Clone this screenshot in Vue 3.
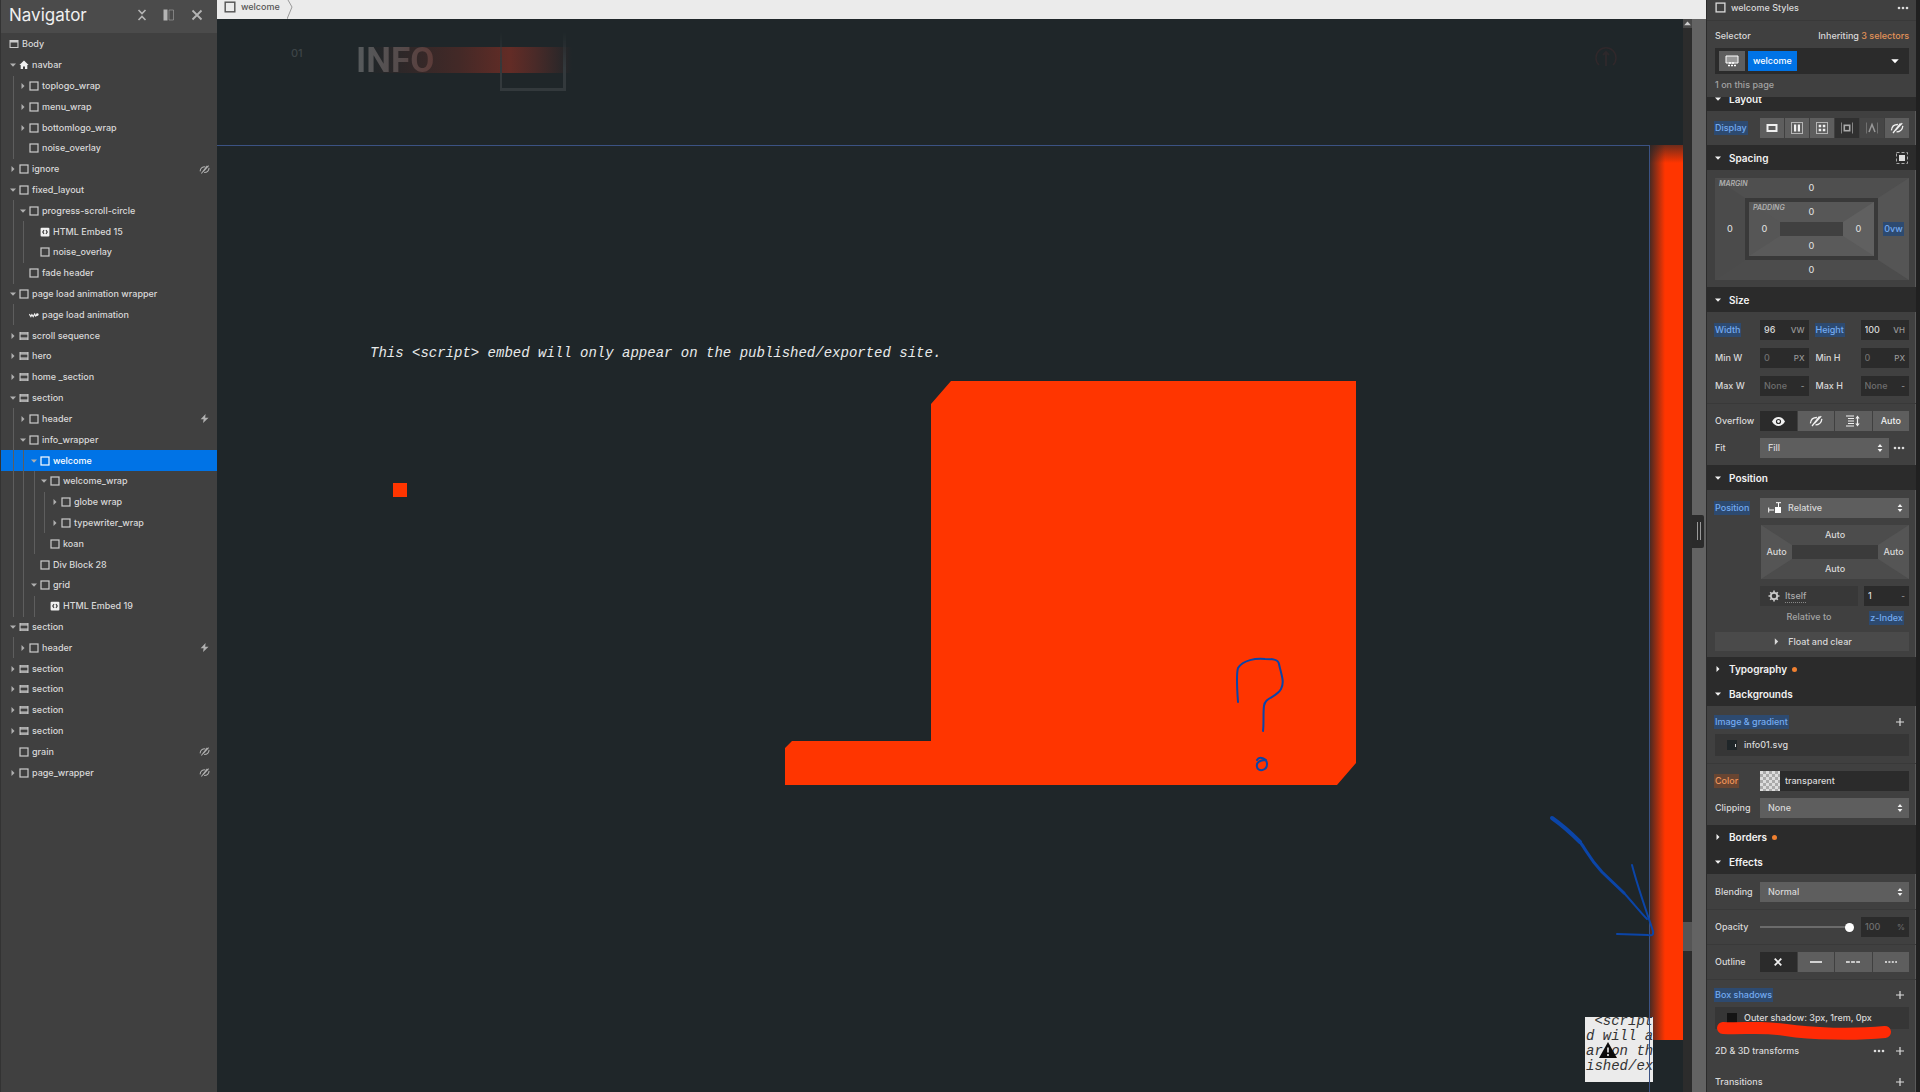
<template>
    <div class="designer">
        <svg class="defs" aria-hidden="true">
            <symbol id="i-box" viewBox="0 0 10 10"><rect x="1" y="1" width="8" height="8" fill="none" stroke="currentColor" stroke-width="1.2" /></symbol>
            <symbol id="i-body" viewBox="0 0 10 10"><path d="M.5 1h9v8h-9zM1.6 3.4v4.5h6.8V3.4z" fill="currentColor" fill-rule="evenodd" /></symbol>
            <symbol id="i-home" viewBox="0 0 10 10"><path d="M5 .6L9.6 5H8.3v4H6V6.4H4V9H1.7V5H.4z" fill="#f0f0f0" /></symbol>
            <symbol id="i-section" viewBox="0 0 10 10"><path d="M.5 1h9v8h-9zM1.6 3.5v3h6.8v-3zM1.6 1.8v.5h6.8v-.5zM1.6 7.7v.5h6.8v-.5z" fill="currentColor" fill-rule="evenodd" /></symbol>
            <symbol id="i-embed" viewBox="0 0 10 10">
                <rect x=".6" y=".8" width="8.8" height="8.6" rx="1" fill="#f0f0f0" />
                <path d="M4 3.2L2.8 5 4 6.9M6 3.2L7.2 5 6 6.9" fill="none" stroke="#404040" stroke-width="1.2" />
            </symbol>
            <symbol id="i-lottie" viewBox="0 0 10 10"><path d="M.3 4.200l1.600 2.400 1-2 1.300 2L5.700 4l1 2L8 5" fill="none" stroke="#f0f0f0" stroke-width="1.2" /><circle cx="8.3" cy="4.6" r="1.3" fill="#f0f0f0" /></symbol>
            <symbol id="i-hidden" viewBox="0 0 12 12"><path d="M1.200 8C1.500 5 3.800 3 6.800 3M11 4.200C10.800 7.200 8.500 9.300 5.600 9.300M2.600 10.300L9 2M4.800 8L10.500 1.800" fill="none" stroke="currentColor" stroke-width="1.1" /></symbol>
            <symbol id="i-bolt" viewBox="0 0 10 10"><path d="M6 1L1.5 5.700h2.700L3.700 9.200l5-4.900H5.600z" fill="currentColor" /></symbol>
            <symbol id="i-down" viewBox="0 0 8 8"><path d="M1 2.5h6L4 5.8z" fill="currentColor" /></symbol>
            <symbol id="i-right" viewBox="0 0 8 8"><path d="M2.5 1v6l3-3z" fill="currentColor" /></symbol>
            <symbol id="i-plus" viewBox="0 0 10 10"><path d="M5 1v8M1 5h8" stroke="currentColor" stroke-width="1.2" /></symbol>
            <symbol id="i-dots" viewBox="0 0 12 4"><circle cx="2" cy="2" r="1.3" fill="currentColor" /><circle cx="6" cy="2" r="1.3" fill="currentColor" /><circle cx="10" cy="2" r="1.3" fill="currentColor" /></symbol>
            <symbol id="i-sort" viewBox="0 0 6 10"><path d="M.6 4L3 1l2.400 3zM.6 6L3 9l2.400-3z" fill="currentColor" /></symbol>
            <symbol id="i-block" viewBox="0 0 14 14"><path d="M1.500 3h11v8h-11zM3.500 5v4h7V5z" fill="currentColor" fill-rule="evenodd" /></symbol>
            <symbol id="i-flex" viewBox="0 0 14 14"><rect x="1.5" y="1.5" width="11" height="11" fill="none" stroke="currentColor" stroke-opacity=".6" /><path d="M4 3.500h2.200v7H4zM7.800 3.500H10v7H7.800z" fill="currentColor" /></symbol>
            <symbol id="i-grid" viewBox="0 0 14 14"><rect x="1.5" y="1.5" width="11" height="11" fill="none" stroke="currentColor" stroke-opacity=".6" /><path d="M3.700 3.700h2.500v2.500H3.700zM7.800 3.700h2.500v2.500H7.800zM3.700 7.800h2.500v2.500H3.700zM7.800 7.800h2.500v2.500H7.800z" fill="currentColor" /></symbol>
            <symbol id="i-inline-block" viewBox="0 0 14 14"><path d="M1.500 1.500v11M12.500 1.500v11" stroke="currentColor" stroke-opacity=".7" /><rect x="4.3" y="4.3" width="5.4" height="5.4" fill="none" stroke="currentColor" stroke-width="1.6" /></symbol>
            <symbol id="i-inline" viewBox="0 0 14 14"><path d="M1.500 1.500v11M12.500 1.500v11" stroke="currentColor" stroke-opacity=".5" /><path d="M4 11L7 3.500 10 11" fill="none" stroke="currentColor" stroke-width="1.5" /></symbol>
            <symbol id="i-eye" viewBox="0 0 12 12"><path d="M0 6c1.500-2.800 3.700-4.100 6-4.100S10.500 3.200 12 6c-1.500 2.800-3.700 4.100-6 4.100S1.500 8.800 0 6zm6-2.400a2.400 2.400 0 100 4.800 2.400 2.400 0 000-4.800z" fill="currentColor" fill-rule="evenodd" /><circle cx="6" cy="6" r="1.3" fill="currentColor" /></symbol>
            <symbol id="i-scroll" viewBox="0 0 14 12"><path d="M0 1h8M2 3.500h6M2 6h6M2 8.500h6M0 11h8M11.500 2v8" stroke="currentColor" stroke-width="1.2" /><path d="M9.300 3.500L11.500.5l2.200 3zM9.300 8.500l2.200 3 2.200-3z" fill="currentColor" /></symbol>
            <symbol id="i-cross" viewBox="0 0 10 10"><path d="M1.700 1.700l6.600 6.600M8.300 1.700L1.700 8.300" stroke="currentColor" stroke-width="1.8" /></symbol>
            <symbol id="i-solid" viewBox="0 0 14 10"><path d="M1 5h12" stroke="currentColor" stroke-width="1.6" /></symbol>
            <symbol id="i-dashed" viewBox="0 0 14 10"><path d="M0 5h14" stroke="currentColor" stroke-width="1.6" stroke-dasharray="3.8 1.3" /></symbol>
            <symbol id="i-dotted" viewBox="0 0 14 10"><path d="M1 5h12" stroke="currentColor" stroke-width="1.6" stroke-dasharray="2 1.4" /></symbol>
        </svg>

        <aside class="navigator">
            <header class="nav-head">
                <h1>Navigator</h1>
                <button aria-label="Collapse all">
                    <svg width="10" height="12" viewBox="0 0 10 12"><path d="M1.500 1L5 4.500 8.500 1M1.500 11L5 7.500 8.500 11" fill="none" stroke="currentColor" stroke-width="1.6" /></svg>
                </button>
                <button aria-label="Pin">
                    <svg width="12" height="12" viewBox="0 0 12 12"><path d="M.5.5h4v11h-4z" fill="currentColor" /><path d="M6 1h4.500v10H6z" fill="none" stroke="currentColor" stroke-opacity=".5" /></svg>
                </button>
                <button aria-label="Close">
                    <svg width="12" height="12" viewBox="0 0 12 12"><path d="M1.500 1.500l9 9M10.500 1.500l-9 9" stroke="currentColor" stroke-width="1.8" /></svg>
                </button>
            </header>
            <ul class="tree">
                <li v-for="(node, i) in nodes" :key="i" :class="{ active: i === selected }" :style="{ paddingLeft: indent(node.depth, 8) + 'px' }" @click="selected = i">
                    <i v-for="n in Math.max(node.depth - 1, 0)" :key="n" class="guide" :style="{ left: indent(n, 2) + 'px' }"></i>
                    <svg v-if="node.open !== undefined" class="caret" :style="{ left: indent(node.depth, -2) + 'px' }" width="8" height="8">
                        <use :href="node.open ? '#i-down' : '#i-right'" />
                    </svg>
                    <svg class="type" width="10" height="10"><use :href="'#i-' + node.icon" /></svg>
                    <span>{{ node.name }}</span>
                    <svg v-if="node.mark" class="mark" width="11" height="11"><use :href="'#i-' + node.mark" /></svg>
                </li>
            </ul>
        </aside>

        <main class="stage">
            <nav class="crumbs">
                <a href="#"><svg width="12" height="12"><use href="#i-box" /></svg>welcome</a>
                <svg width="7" height="19" viewBox="0 0 7 19"><path d="M1 0l4 7L0 19" fill="none" stroke="#999" /></svg>
            </nav>
            <div class="view">
                <div class="canvas">
                    <span class="index">01</span>
                    <span class="glow"></span>
                    <h2 class="info">INFO</h2>
                    <span class="frame"></span>
                    <svg class="badge" width="24" height="24" viewBox="0 0 24 24"><path d="M5 19A10 10 0 1119 19" fill="none" stroke="#30282b" stroke-width="1.5" /><path d="M9 9l3-3 3 3M12 6v14" fill="none" stroke="#2d282b" stroke-width="2" /></svg>
                    <p class="embed-note">This &lt;script&gt; embed will only appear on the published/exported site.</p>
                    <span class="dot"></span>
                    <svg class="plate" width="571" height="404" viewBox="0 0 571 404"><path d="M146 23L166 0H571V382L552 404H0V367L7 360H146z" fill="#ff3500" /></svg>
                    <div class="strip"></div>
                    <div class="thumb">
                        <pre> &lt;script
d will a
ar on th
ished/ex</pre>
                        <svg width="18" height="16" viewBox="0 0 18 16"><path d="M9 0l9 16H0z" fill="#0c0c0c" /><path d="M9 5.500v5M9 12v2" stroke="#eee" stroke-width="1.6" /></svg>
                    </div>
                    <div class="outline"></div>
                    <svg class="question" width="60" height="120" viewBox="0 0 60 120">
                        <path d="M8 49C7 35 6 22 8 15 13 7 26 5 35 6c7 0 13 0 14 5 2 10 6 18 2 25-5 9-16 8-17 17-1 7 0 18-1 25" />
                        <path d="M27 107c2-4 10-2 10 4 0 7-9 8-10 3-1-4 2-7 9-7" />
                    </svg>
                    <svg class="arrow" width="110" height="130" viewBox="0 0 110 130">
                        <path d="M6 5C16 12 27 22 34 29" stroke-width="4" />
                        <path d="M34 29C41 38 42 44 56 59L78 80" stroke-width="3" />
                        <path d="M78 80C88 91 94 99 101 106" stroke-width="2" />
                        <path d="M86 52C92 75 99 94 107 118c1 6-3 4-5 4L71 121" stroke-width="2" />
                    </svg>
                </div>
                <div class="scrollbar">
                    <svg width="7" height="7"><use href="#i-down" /></svg>
                    <span></span>
                </div>
                <div class="gutter"><span></span></div>
            </div>
        </main>

        <aside class="styles">
            <div class="styles-head">
                <div class="title"><svg width="11" height="11"><use href="#i-box" /></svg>welcome Styles
                    <button class="plain" aria-label="More"><svg width="12" height="4"><use href="#i-dots" /></svg></button>
                </div>
                <div class="selector">
                    <div class="inherit"><span>Selector</span><span>Inheriting <a href="#">3 selectors</a></span></div>
                    <div class="combo">
                        <button class="device" aria-label="States">
                            <svg width="14" height="12" viewBox="0 0 14 12"><path d="M1 1h12v7H1z" fill="#999" stroke="#fff" /><path d="M3 10.500h8M4 8h6" stroke="#fff" stroke-width="1.4" stroke-dasharray="2 1" /></svg>
                        </button>
                        <button class="tag">welcome</button>
                        <svg width="10" height="10"><use href="#i-down" /></svg>
                    </div>
                    <small>1 on this page</small>
                </div>
            </div>

            <h3><svg width="8" height="8"><use href="#i-down" /></svg>Layout</h3>
            <div class="group layout">
                <div class="field">
                    <span class="label"><em>Display</em></span>
                    <div class="buttons display">
                        <button v-for="d in displays" :key="d" :class="d" :aria-label="d"><svg width="14" height="14"><use :href="'#i-' + d" /></svg></button>
                    </div>
                </div>
            </div>

            <h3><svg width="8" height="8"><use href="#i-down" /></svg>Spacing
                <button class="plain" aria-label="Spacing mode"><svg width="14" height="12" viewBox="0 0 14 12"><rect x="1.5" y=".5" width="11" height="11" fill="none" stroke="#aaa" stroke-dasharray="3 2" /><path d="M4 3h6v6H4z" fill="#ddd" /></svg></button>
            </h3>
            <div class="group">
                <div class="margin">
                    <b>MARGIN</b>
                    <button>0</button><button>0</button><button class="set"><em>0vw</em></button><button>0</button>
                    <div class="padding">
                        <b>PADDING</b>
                        <button>0</button><button>0</button><button>0</button><button>0</button>
                    </div>
                </div>
            </div>

            <h3><svg width="8" height="8"><use href="#i-down" /></svg>Size</h3>
            <div class="group">
                <div class="sizes">
                    <template v-for="s in sizes" :key="s.label">
                        <label :for="s.label"><em v-if="s.value">{{ s.label }}</em><template v-else>{{ s.label }}</template></label>
                        <div class="input"><input :id="s.label" v-model="s.value" :placeholder="s.hint"><span>{{ s.unit }}</span></div>
                    </template>
                </div>
                <hr>
                <div class="field">
                    <span class="label">Overflow</span>
                    <div class="buttons">
                        <button class="on" aria-label="Visible"><svg width="13" height="13"><use href="#i-eye" /></svg></button>
                        <button aria-label="Hidden"><svg width="14" height="14"><use href="#i-hidden" /></svg></button>
                        <button aria-label="Scroll"><svg width="14" height="12"><use href="#i-scroll" /></svg></button>
                        <button>Auto</button>
                    </div>
                </div>
                <div class="field">
                    <label for="fit">Fit</label>
                    <div class="select"><select id="fit"><option>Fill</option></select><svg width="6" height="10"><use href="#i-sort" /></svg></div>
                    <button class="plain more" aria-label="More"><svg width="12" height="4"><use href="#i-dots" /></svg></button>
                </div>
            </div>

            <h3><svg width="8" height="8"><use href="#i-down" /></svg>Position</h3>
            <div class="group position">
                <div class="field">
                    <label for="pos"><em>Position</em></label>
                    <div class="select with-icon">
                        <svg class="pos-icon" width="14" height="12" viewBox="0 0 14 12"><path d="M7 5h6v6H7z" fill="#fff" /><path d="M8 .7h5M10.500 1v4M.7 5.500v5M1 8h5" stroke="#fff" /></svg>
                        <select id="pos"><option>Relative</option></select><svg width="6" height="10"><use href="#i-sort" /></svg>
                    </div>
                </div>
                <div class="offsets"><button>Auto</button><button>Auto</button><button>Auto</button><button>Auto</button></div>
                <div class="relative">
                    <button class="itself"><svg width="12" height="12" viewBox="0 0 12 12"><circle cx="6" cy="6" r="3.2" fill="none" stroke="#ccc" stroke-width="1.8" /><path d="M6 .5v2M6 9.500v2M.5 6h2M9.500 6h2M2.200 2.200l1.300 1.300M8.500 8.500l1.300 1.300M2.200 9.800l1.300-1.300M8.500 3.500l1.300-1.300" stroke="#ccc" stroke-width="1.6" /></svg><u>Itself</u></button>
                    <div class="input"><input id="z" value="1"><span>-</span></div>
                    <small>Relative to</small>
                    <label for="z"><em>z-Index</em></label>
                </div>
                <button class="float"><svg width="9" height="9"><use href="#i-right" /></svg>Float and clear</button>
            </div>

            <h3 class="closed"><svg width="8" height="8"><use href="#i-right" /></svg>Typography<i></i></h3>
            <h3><svg width="8" height="8"><use href="#i-down" /></svg>Backgrounds</h3>
            <div class="group backgrounds">
                <div class="adder"><em>Image &amp; gradient</em><button class="plain" aria-label="Add background"><svg width="10" height="10"><use href="#i-plus" /></svg></button></div>
                <div class="layer"><span class="chip image"></span>info01.svg</div>
                <hr>
                <div class="field">
                    <label for="color"><em class="warm">Color</em></label>
                    <span class="swatch"></span>
                    <div class="input"><input id="color" value="transparent"></div>
                </div>
                <div class="field">
                    <label for="clip">Clipping</label>
                    <div class="select"><select id="clip"><option>None</option></select><svg width="6" height="10"><use href="#i-sort" /></svg></div>
                </div>
            </div>

            <h3 class="closed"><svg width="8" height="8"><use href="#i-right" /></svg>Borders<i></i></h3>
            <h3><svg width="8" height="8"><use href="#i-down" /></svg>Effects</h3>
            <div class="group effects">
                <div class="field">
                    <label for="blend">Blending</label>
                    <div class="select"><select id="blend"><option>Normal</option></select><svg width="6" height="10"><use href="#i-sort" /></svg></div>
                </div>
                <hr>
                <div class="field">
                    <label for="opacity">Opacity</label>
                    <input id="opacity" v-model="opacity" type="range" min="0" max="100">
                    <div class="input dim"><input v-model="opacity" aria-label="Opacity percent"><span>%</span></div>
                </div>
                <hr>
                <div class="field">
                    <span class="label">Outline</span>
                    <div class="buttons">
                        <button v-for="o in outlines" :key="o" :class="{ on: o === 'cross' }" :aria-label="o"><svg :width="o === 'cross' ? 10 : 14" height="10"><use :href="'#i-' + o" /></svg></button>
                    </div>
                </div>
                <hr>
                <div class="adder"><em>Box shadows</em><button class="plain" aria-label="Add shadow"><svg width="10" height="10"><use href="#i-plus" /></svg></button></div>
                <div class="layer"><span class="chip"></span>Outer shadow: 3px, 1rem, 0px
                    <svg class="marker" width="178" height="18" viewBox="0 0 178 18"><path d="M7 6C30 7 45 4 70 8s68 5 99 2" fill="none" stroke="#ff2a05" stroke-width="12" stroke-linecap="round" stroke-linejoin="round" /></svg>
                </div>
                <div class="adder tail">2D &amp; 3D transforms
                    <button class="plain" aria-label="Transform settings"><svg width="12" height="4"><use href="#i-dots" /></svg></button>
                    <button class="plain" aria-label="Add transform"><svg width="10" height="10"><use href="#i-plus" /></svg></button>
                </div>
                <div class="adder tail">Transitions
                    <button class="plain" aria-label="Add transition"><svg width="10" height="10"><use href="#i-plus" /></svg></button>
                </div>
            </div>
        </aside>
    </div>
</template>

<script setup>
import { reactive, ref } from 'vue'

const selected = ref(20)
const opacity = ref(100)

const nodes = [
    { name: 'Body', depth: 0, icon: 'body' },
    { name: 'navbar', depth: 1, icon: 'home', open: true },
    { name: 'toplogo_wrap', depth: 2, icon: 'box', open: false },
    { name: 'menu_wrap', depth: 2, icon: 'box', open: false },
    { name: 'bottomlogo_wrap', depth: 2, icon: 'box', open: false },
    { name: 'noise_overlay', depth: 2, icon: 'box' },
    { name: 'ignore', depth: 1, icon: 'box', open: false, mark: 'hidden' },
    { name: 'fixed_layout', depth: 1, icon: 'box', open: true },
    { name: 'progress-scroll-circle', depth: 2, icon: 'box', open: true },
    { name: 'HTML Embed 15', depth: 3, icon: 'embed' },
    { name: 'noise_overlay', depth: 3, icon: 'box' },
    { name: 'fade header', depth: 2, icon: 'box' },
    { name: 'page load animation wrapper', depth: 1, icon: 'box', open: true },
    { name: 'page load animation', depth: 2, icon: 'lottie' },
    { name: 'scroll sequence', depth: 1, icon: 'section', open: false },
    { name: 'hero', depth: 1, icon: 'section', open: false },
    { name: 'home _section', depth: 1, icon: 'section', open: false },
    { name: 'section', depth: 1, icon: 'section', open: true },
    { name: 'header', depth: 2, icon: 'box', open: false, mark: 'bolt' },
    { name: 'info_wrapper', depth: 2, icon: 'box', open: true },
    { name: 'welcome', depth: 3, icon: 'box', open: true },
    { name: 'welcome_wrap', depth: 4, icon: 'box', open: true },
    { name: 'globe wrap', depth: 5, icon: 'box', open: false },
    { name: 'typewriter_wrap', depth: 5, icon: 'box', open: false },
    { name: 'koan', depth: 4, icon: 'box' },
    { name: 'Div Block 28', depth: 3, icon: 'box' },
    { name: 'grid', depth: 3, icon: 'box', open: true },
    { name: 'HTML Embed 19', depth: 4, icon: 'embed' },
    { name: 'section', depth: 1, icon: 'section', open: true },
    { name: 'header', depth: 2, icon: 'box', open: false, mark: 'bolt' },
    { name: 'section', depth: 1, icon: 'section', open: false },
    { name: 'section', depth: 1, icon: 'section', open: false },
    { name: 'section', depth: 1, icon: 'section', open: false },
    { name: 'section', depth: 1, icon: 'section', open: false },
    { name: 'grain', depth: 1, icon: 'box', mark: 'hidden' },
    { name: 'page_wrapper', depth: 1, icon: 'box', open: false, mark: 'hidden' }
]

const displays = ['block', 'flex', 'grid', 'inline-block', 'inline', 'hidden']
const outlines = ['cross', 'solid', 'dashed', 'dotted']

const sizes = reactive([
    { label: 'Width', value: '96', unit: 'VW' },
    { label: 'Height', value: '100', unit: 'VH' },
    { label: 'Min W', value: '', hint: '0', unit: 'PX' },
    { label: 'Min H', value: '', hint: '0', unit: 'PX' },
    { label: 'Max W', value: '', hint: 'None', unit: '-' },
    { label: 'Max H', value: '', hint: 'None', unit: '-' }
])

// levels are a little over 10px apart
const indent = (depth, offset) => Math.floor(depth * 10.4) + offset
</script>

<style>
body {
    background: #1f2629;
}
</style>

<style scoped>
.designer {
    display: grid;
    grid-template-columns: 217px 1fr 213px;
    height: 100vh;
    overflow: hidden;
    font-family: Inter, "Liberation Sans", sans-serif;
    font-size: 9px;
    font-weight: 500;
    line-height: 12px;
    color: #d9d9d9;
}

.designer * {
    box-sizing: border-box;
}

.defs {
    position: absolute;
    width: 0;
    height: 0;
}

svg {
    display: block;
    flex: none;
}

button,
input,
select {
    font: inherit;
    color: inherit;
    border: 0;
    margin: 0;
    padding: 0;
    background: none;
    border-radius: 0;
    min-width: 0;
}

a {
    color: inherit;
    text-decoration: none;
}

/* navigator */
.navigator {
    background: #404040;
    border-left: 1px solid #333;
}

.nav-head {
    display: flex;
    align-items: center;
    gap: 16px;
    height: 33px;
    padding: 0 14px 4px 8px;
    background: #4b4b4b;
    color: #b5b5b5;
}

.nav-head h1 {
    flex: 1;
    margin: 0;
    font-size: 17px;
    line-height: 24px;
    font-weight: 400;
    color: #f0f0f0;
}

.tree {
    display: grid;
    grid-auto-rows: 1fr;
    height: 749px;
    margin: 1px 0 0;
    padding: 0;
    list-style: none;
}

.tree li {
    position: relative;
    display: flex;
    align-items: center;
    gap: 3px;
}

.tree li.active {
    background: #0073e6;
    color: #fff;
}

.tree .type {
    color: #ccc;
}

.tree .active .type {
    color: #fff;
}

.guide {
    position: absolute;
    top: 0;
    bottom: 0;
    width: 1px;
    background: #5e5e5e;
}

.caret {
    position: absolute;
    color: #b0b0b0;
}

.mark {
    margin: 0 7px 0 auto;
    color: #b0b0b0;
}

/* stage */
.stage {
    display: flex;
    flex-direction: column;
    min-width: 0;
    border-right: 1px solid #2b2b2b;
}

.crumbs {
    display: flex;
    height: 19px;
    background: #ebebeb;
    color: #555;
}

.crumbs a {
    display: flex;
    gap: 5px;
    padding: 1px 7px 0;
}

.view {
    flex: 1;
    display: flex;
    min-height: 0;
}

.canvas {
    position: relative;
    flex: 1;
    overflow: hidden;
    background: #1f2629;
}

.canvas > * {
    position: absolute;
}

.index {
    left: 74px;
    top: 28px;
    font-size: 11px;
    color: #3d4447;
}

.glow {
    left: 149px;
    top: 28px;
    width: 206px;
    height: 26px;
    background: linear-gradient(90deg, transparent, #432927 45%, #632c26 70%, #4a2a28 82%, transparent);
}

.info {
    left: 139px;
    top: 21px;
    margin: 0;
    font: 700 35px/42px Roboto, sans-serif;
    color: transparent;
    background: linear-gradient(90deg, #565b5d, #554a4a 60%, #5c3b38);
    background-clip: text;
}

.frame {
    left: 283px;
    top: 12px;
    width: 66px;
    height: 60px;
    border: solid #33393c;
    border-width: 0 3px 3px 2px;
    mask-image: linear-gradient(transparent, #000 60%);
}

.badge {
    right: 65px;
    top: 27px;
}

.embed-note {
    left: 153px;
    top: 324px;
    margin: 0;
    font: italic 14px/20px "Liberation Mono", monospace;
    color: #e8eaea;
    white-space: nowrap;
}

.dot {
    left: 176px;
    top: 464px;
    width: 14px;
    height: 14px;
    background: #ff3500;
}

.plate {
    left: 568px;
    top: 362px;
}

.strip {
    right: 0;
    top: 126px;
    width: 33px;
    height: 895px;
    background: linear-gradient(90deg, rgba(31, 38, 41, .8), transparent 15px), linear-gradient(rgba(31, 38, 41, .65), transparent 18px), #ff3500;
}

.outline {
    inset: 126px 33px 0 0;
    border: solid #3b5283;
    border-width: 1px 1px 0 0;
}

.thumb {
    right: 30px;
    top: 998px;
    width: 68px;
    height: 65px;
    overflow: hidden;
    background: #ebebeb;
}

.thumb pre {
    margin: -3px 0 0 1px;
    font: italic 14px/15px "Liberation Mono", monospace;
    color: #333;
}

.thumb svg {
    position: absolute;
    left: 14px;
    top: 25px;
}

.question,
.arrow {
    fill: none;
    stroke: #0b45a8;
    stroke-width: 2;
    stroke-linecap: round;
    stroke-linejoin: round;
}

.question {
    left: 1013px;
    top: 634px;
}

.arrow {
    right: 27px;
    top: 794px;
}

.scrollbar {
    position: relative;
    width: 9px;
    background: #2c2c2c;
}

.scrollbar svg {
    width: 9px;
    height: 9px;
    background: #484848;
    color: #ccc;
    transform: rotate(180deg);
}

.scrollbar span {
    position: absolute;
    top: 903px;
    width: 9px;
    height: 29px;
    background: #555;
}

.gutter {
    position: relative;
    width: 14px;
    background: #636363;
}

.gutter span {
    position: absolute;
    top: 496px;
    width: 12px;
    height: 33px;
    border-radius: 0 2px 2px 0;
    background: linear-gradient(#999, #999) 5px 7px / 1px 18px no-repeat, linear-gradient(#999, #999) 8px 7px / 1px 18px no-repeat, #2b2b2b;
}

/* styles panel */
.styles {
    overflow: hidden;
    background: #404040;
    border-right: 4px solid #202020;
    box-shadow: inset -1px 0 #5a5a5a;
}

.styles-head {
    position: relative;
    z-index: 1;
    height: 97px;
    margin-bottom: -11px;
    background: #404040;
}

.title {
    display: flex;
    align-items: center;
    gap: 5px;
    height: 21px;
    padding: 0 7px 5px 8px;
    border-bottom: 1px solid #393939;
}

.title button,
h3 button {
    margin-left: auto;
}

.plain {
    display: grid;
    place-items: center;
    color: #ddd;
}

.selector {
    padding: 9px 7px 0 8px;
}

.inherit {
    display: flex;
    justify-content: space-between;
}

.inherit a {
    color: #e39358;
}

.combo {
    display: flex;
    align-items: center;
    gap: 3px;
    height: 26px;
    margin: 6px 0 5px;
    padding: 0 9px 0 4px;
    background: #2b2b2b;
}

.combo > svg {
    margin-left: auto;
    color: #fff;
}

.device {
    display: grid;
    place-items: center;
    width: 26px;
    height: 20px;
    background: #5e5e5e;
}

.tag {
    height: 20px;
    padding: 0 5px;
    background: #0073e6;
    color: #fff;
}

small {
    font-size: 9px;
    color: #a3a3a3;
}

h3 {
    display: flex;
    align-items: center;
    gap: 7px;
    height: 25px;
    margin: 0;
    padding: 0 7px;
    font-size: 10px;
    font-weight: 600;
    color: #f2f2f2;
    background: #2b2b2b;
}

h3.closed {
    height: 24px;
}

h3 i {
    width: 5px;
    height: 5px;
    margin-left: -2px;
    border-radius: 50%;
    background: #f08030;
}

.group {
    display: flex;
    flex-direction: column;
    gap: 7px;
    padding: 8px 7px 7px 8px;
}

.layout {
    padding-top: 7px;
}

hr {
    width: calc(100% + 15px);
    height: 1px;
    margin: 0 -8px;
    border: 0;
    background: #393939;
}

.field {
    display: flex;
    align-items: center;
    height: 20px;
}

.field > label,
.field > .label {
    width: 45px;
    flex: none;
    white-space: nowrap;
}

em {
    display: inline-block;
    margin: 0 -1px;
    padding: 1px;
    font-style: normal;
    color: #74aaf0;
    background: #2d4a70;
}

em.warm {
    color: #f0955a;
    background: #684532;
}

.buttons {
    flex: 1;
    display: flex;
    gap: 1px;
    height: 20px;
    color: #f0f0f0;
}

.buttons button {
    flex: 1;
    display: grid;
    place-items: center;
    background: #5e5e5e;
}

.buttons .on {
    background: #2b2b2b;
}

.buttons .inline-block {
    background: #303030;
    color: #aaa;
}

.buttons .inline {
    background: #464646;
    color: #999;
}

.margin,
.padding,
.offsets {
    position: relative;
    display: grid;
    grid-template-areas: ". t ." "l c r" ". b .";
}

.margin {
    grid-template-rows: 20px 62px 20px;
    grid-template-columns: 30px 1fr 31px;
    background: #393939;
}

.margin::before,
.padding::before,
.offsets::before {
    content: "";
    position: absolute;
    inset: 0;
    border: 20px solid;
    border-color: #4f4f4f #555 #4c4c4c #4b4b4b;
}

.margin::before {
    border-left-width: 30px;
    border-right-width: 31px;
}

.margin b,
.padding b {
    position: absolute;
    left: 4px;
    top: 1px;
    z-index: 1;
    font-size: 7px;
    line-height: 10px;
    font-style: italic;
    font-weight: 600;
    color: #b0b0b0;
}

.margin button,
.padding button,
.offsets button {
    position: relative;
    text-align: center;
    white-space: nowrap;
}

button:nth-of-type(1) {
    grid-area: t;
}

button:nth-of-type(2) {
    grid-area: l;
}

button:nth-of-type(3) {
    grid-area: r;
}

button:nth-of-type(4) {
    grid-area: b;
}

.padding {
    grid-area: c;
    grid-template-rows: 20px 14px 20px;
    grid-template-columns: 31px 1fr 31px;
    margin: 4px;
    background: #404040;
}

.padding::before {
    border-left-width: 31px;
    border-right-width: 31px;
    border-color: #575757 #606060 #5a5a5a #565656;
}

.offsets {
    grid-template-rows: 20px 14px 20px;
    grid-template-columns: 31px 1fr 31px;
    margin-left: 46px;
    background: #3b3b3b;
}

.offsets::before {
    border-width: 20px 31px;
    border-color: #4c4c4c #555 #4c4c4c #555;
}

.sizes {
    display: grid;
    grid-template-columns: 45px 1fr 52px 1fr;
    grid-auto-rows: 20px;
    row-gap: 8px;
    align-items: center;
}

.sizes label:nth-of-type(even) {
    padding-left: 7px;
}

.input {
    display: flex;
    align-items: center;
    height: 20px;
    padding: 0 4px;
    background: #2b2b2b;
}

.input input {
    flex: 1;
    width: 0;
    outline: 0;
}

.input input::placeholder {
    color: #6f6f6f;
    opacity: 1;
}

.input span {
    font-size: 8px;
    color: #999;
}

.dim {
    width: 48px;
    color: #6f6f6f;
}

.dim span {
    color: #6f6f6f;
}

.select {
    position: relative;
    flex: 1;
    display: flex;
    align-items: center;
    height: 20px;
    background: #5e5e5e;
}

.select select {
    flex: 1;
    height: 20px;
    padding-left: 8px;
    appearance: none;
    outline: 0;
}

.select svg {
    position: absolute;
    right: 6px;
    pointer-events: none;
    color: #f0f0f0;
}

.with-icon select {
    padding-left: 28px;
}

.select .pos-icon {
    left: 8px;
    right: auto;
}

.more {
    width: 20px;
}

.position {
    padding-bottom: 6px;
}

.relative {
    display: grid;
    grid-template-columns: 98px 45px;
    justify-content: end;
    gap: 5px 6px;
}

.relative small,
.relative label {
    text-align: center;
}

.relative .itself {
    grid-area: auto;
    display: flex;
    align-items: center;
    gap: 5px;
    padding-left: 8px;
    background: #383838;
    color: #aaa;
}

.itself u {
    text-decoration: none;
    border-bottom: 1px dotted #888;
}

.float {
    display: flex;
    align-items: center;
    justify-content: center;
    gap: 7px;
    height: 19px;
    background: #4a4a4a;
}

.adder {
    display: flex;
    align-items: center;
    gap: 10px;
    height: 16px;
    margin-bottom: -3px;
    padding-right: 4px;
}

.adder button:first-of-type {
    margin-left: auto;
}

.layer {
    position: relative;
    display: flex;
    align-items: center;
    gap: 7px;
    height: 22px;
    padding-left: 12px;
    white-space: nowrap;
    background: #363636;
}

.effects .layer {
    margin-bottom: 3px;
}

.chip {
    width: 10px;
    height: 10px;
    background: #141414;
}

.image {
    background: linear-gradient(#ddd, #ddd) 8px 4px / 1px 3px no-repeat, #1f2629;
}

.backgrounds .field .input {
    flex: 1;
    padding-left: 5px;
}

.swatch {
    width: 20px;
    height: 20px;
    background: repeating-conic-gradient(#aaa 0 25%, #ddd 0 50%) 0 0 / 6px 6px;
}

.marker {
    position: absolute;
    left: 1px;
    top: 15px;
    z-index: 1;
}

.tail {
    height: 24px;
    margin-bottom: 0;
}

input[type="range"] {
    flex: 1;
    appearance: none;
    height: 10px;
    margin-right: 7px;
    background: linear-gradient(#6b6b6b, #6b6b6b) center / 100% 2px no-repeat;
}

input[type="range"]::-webkit-slider-thumb {
    appearance: none;
    width: 9px;
    height: 9px;
    border-radius: 50%;
    background: #fff;
}
</style>
